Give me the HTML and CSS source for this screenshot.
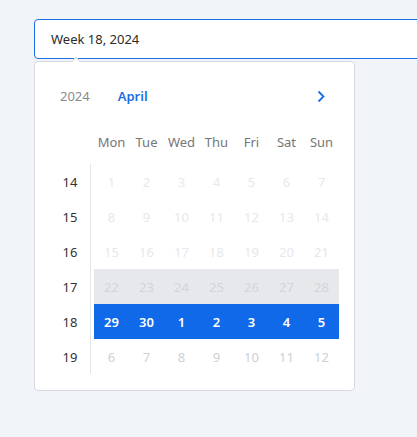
FILE: index.html
```html
<!DOCTYPE html>
<html>
<head>
<meta charset="utf-8">
<link rel="stylesheet" href="styles.css">
</head>
<body>
<div class="page">
  <div class="field">Week 18, 2024</div>
  <div class="popup">
    <span class="notch"></span>
    <div class="head">
      <span class="year">2024</span>
      <span class="month">April</span>
      <svg class="next" width="8" height="13" viewBox="0 0 8 13"><path d="M1.5 1.5 L6.5 6.5 L1.5 11.5" fill="none" stroke="#1a6fe6" stroke-width="1.8"/></svg>
    </div>
    <div class="weekdays">
      <span></span>
      <span>Mon</span><span>Tue</span><span>Wed</span><span>Thu</span><span>Fri</span><span>Sat</span><span>Sun</span>
    </div>
    <div class="body">
      <div class="weeks">
        <span>14</span><span>15</span><span>16</span><span>17</span><span>18</span><span>19</span>
      </div>
      <div class="days">
        <div class="row faint"><span>1</span><span>2</span><span>3</span><span>4</span><span>5</span><span>6</span><span>7</span></div>
        <div class="row faint"><span>8</span><span>9</span><span>10</span><span>11</span><span>12</span><span>13</span><span>14</span></div>
        <div class="row faint"><span>15</span><span>16</span><span>17</span><span>18</span><span>19</span><span>20</span><span>21</span></div>
        <div class="row hover"><span>22</span><span>23</span><span>24</span><span>25</span><span>26</span><span>27</span><span>28</span></div>
        <div class="row selected"><span>29</span><span>30</span><span>1</span><span>2</span><span>3</span><span>4</span><span>5</span></div>
        <div class="row next-month"><span>6</span><span>7</span><span>8</span><span>9</span><span>10</span><span>11</span><span>12</span></div>
      </div>
    </div>
  </div>
</div>
</body>
</html>
```

FILE: styles.css
```css
html, body {
  margin: 0;
  padding: 0;
  background: #f1f4f8;
  overflow: hidden;
  font-family: "Noto Sans", "Open Sans", sans-serif;
}
.page {
  padding: 19px 0 0 34px;
}
.field {
  box-sizing: border-box;
  width: 420px;
  height: 40px;
  border: 1px solid #1a6fe6;
  border-radius: 4px;
  background: #fff;
  padding-left: 16px;
  display: flex;
  align-items: center;
  font-size: 13px;
  color: #2b2b2b;
}
.popup {
  position: relative;
  box-sizing: border-box;
  width: 321px;
  margin-top: 2px;
  background: #fff;
  border: 1px solid #d6dae0;
  border-radius: 4px;
  padding: 14px 15px 16px 15px;
}
.notch {
  position: absolute;
  left: 38px;
  top: -4px;
  width: 5px;
  height: 5px;
  background: #fff;
  border-left: 1px solid #d6dae0;
  border-top: 1px solid #d6dae0;
  transform: rotate(45deg);
}
.head {
  height: 40px;
  display: flex;
  align-items: center;
  padding-left: 10px;
  padding-right: 14px;
  font-size: 13px;
}
.year {
  color: #8a8a8a;
}
.month {
  color: #1a6fe6;
  font-weight: 600;
  margin-left: 28px;
}
.next {
  margin-left: auto;
}
.weekdays {
  display: grid;
  grid-template-columns: 44px repeat(7, 35px);
  height: 32px;
  margin-top: 10px;
  margin-bottom: 6px;
  align-items: center;
  font-size: 13px;
  color: #767676;
}
.weekdays span {
  text-align: center;
}
.body {
  display: flex;
}
.weeks {
  width: 40px;
  border-right: 1px solid #e4e6ea;
  margin-right: 3px;
  display: flex;
  flex-direction: column;
  font-size: 13px;
  color: #333;
}
.weeks span {
  height: 35px;
  display: flex;
  align-items: center;
  justify-content: center;
}
.days {
  display: flex;
  flex-direction: column;
}
.row {
  display: grid;
  grid-template-columns: repeat(7, 35px);
  height: 35px;
  font-size: 13px;
}
.row span {
  display: flex;
  align-items: center;
  justify-content: center;
}
.faint {
  color: #e7e8ea;
}
.hover {
  background: #e6e8eb;
  color: #d2d5d9;
}
.selected {
  background: #1069e8;
  color: #fff;
  font-weight: 600;
}
.next-month {
  color: #cdd0d5;
}
```
